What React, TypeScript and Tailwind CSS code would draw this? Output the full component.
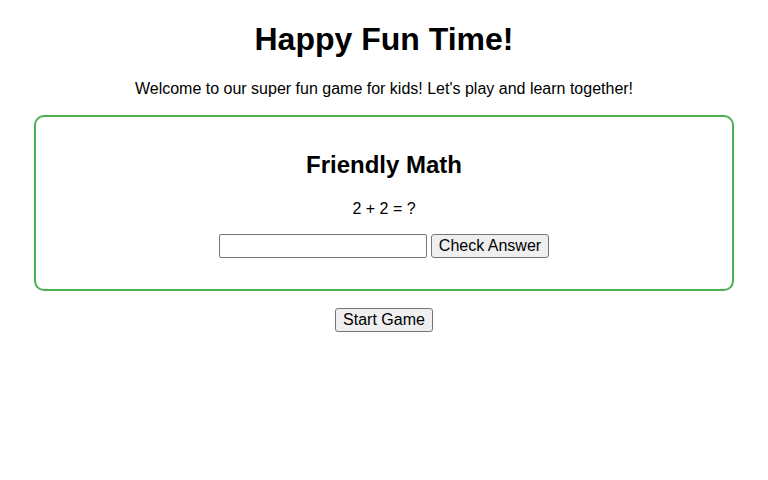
import React from "react";

function MathCard() {
  return (
    <div className="mx-auto mt-[17px] w-[700px] rounded-[10px] border-2 border-[#4caf50] px-5 pt-[34px] pb-[31px] text-center">
      <h2 className="text-2xl leading-[28px] font-bold">Friendly Math</h2>
      <p className="mt-[21px] text-base leading-[18px]">2 + 2 = ?</p>
      <div className="mt-4 flex items-center justify-center gap-1">
        <input
          type="text"
          className="h-6 w-[208px] rounded-[2px] border border-[#767676] bg-white px-0.5 text-base outline-none"
        />
        <button className="h-6 rounded-[3px] border border-[#767676] bg-[#efefef] px-[7px] text-base leading-[20px] text-black">
          Check Answer
        </button>
      </div>
    </div>
  );
}

export default function App() {
  return (
    <div className="min-h-screen bg-white font-['Liberation_Sans',Arial,sans-serif] text-black">
      <h1 className="pt-[21px] text-center text-[32px] leading-[37px] font-bold">Happy Fun Time!</h1>
      <p className="mt-[22px] text-center text-base leading-[18px]">
        Welcome to our super fun game for kids! Let's play and learn together!
      </p>
      <MathCard />
      <div className="mt-[17px] flex justify-center">
        <button className="h-6 rounded-[3px] border border-[#767676] bg-[#efefef] px-[7px] text-base leading-[20px] text-black">
          Start Game
        </button>
      </div>
    </div>
  );
}
